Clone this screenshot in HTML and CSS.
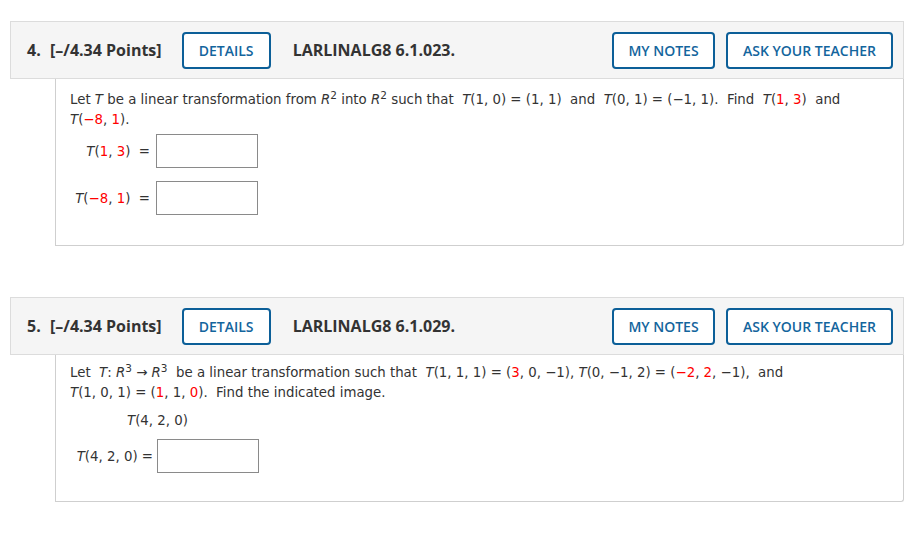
FILE: index.html
```html
<!DOCTYPE html>
<html>
<head>
<meta charset="utf-8">
<link rel="stylesheet" href="styles.css">
</head>
<body>
<div class="page">
  <section class="question q4">
    <div class="qhead">
      <span class="qnum">4.</span>
      <span class="qpts">[–/4.34 Points]</span>
      <button class="btn btn-details">DETAILS</button>
      <span class="qref">LARLINALG8 6.1.023.</span>
      <span class="spacer"></span>
      <button class="btn btn-notes">MY NOTES</button>
      <button class="btn btn-ask">ASK YOUR TEACHER</button>
    </div>
    <div class="qbody body4">
      <p class="prompt">Let <i>T</i> be a linear transformation from <i>R</i><sup>2</sup> into <i>R</i><sup>2</sup> such that&nbsp; <i>T</i>(1, 0) = (1, 1)&nbsp; and&nbsp; <i>T</i>(0, 1) = (−1, 1).&nbsp; Find&nbsp; <i>T</i>(<span class="r">1</span>, <span class="r">3</span>)&nbsp; and<br><i>T</i>(<span class="r">−8</span>, <span class="r">1</span>).</p>
      <div class="answers">
        <span class="lbl"><i>T</i>(<span class="r">1</span>, <span class="r">3</span>)&nbsp; =</span><span class="box"></span>
        <span class="lbl"><i>T</i>(<span class="r">−8</span>, <span class="r">1</span>)&nbsp; =</span><span class="box"></span>
      </div>
    </div>
  </section>

  <section class="question q5">
    <div class="qhead">
      <span class="qnum">5.</span>
      <span class="qpts">[–/4.34 Points]</span>
      <button class="btn btn-details">DETAILS</button>
      <span class="qref">LARLINALG8 6.1.029.</span>
      <span class="spacer"></span>
      <button class="btn btn-notes">MY NOTES</button>
      <button class="btn btn-ask">ASK YOUR TEACHER</button>
    </div>
    <div class="qbody body5">
      <p class="prompt">Let&nbsp; <i>T</i>: <i>R</i><sup>3</sup> → <i>R</i><sup>3</sup>&nbsp; be a linear transformation such that&nbsp; <i>T</i>(1, 1, 1) = (<span class="r">3</span>, 0, −1), <i>T</i>(0, −1, 2) = (<span class="r">−2</span>, <span class="r">2</span>, −1),&nbsp; and<br><i>T</i>(1, 0, 1) = (<span class="r">1</span>, 1, <span class="r">0</span>).&nbsp; Find the indicated image.</p>
      <p class="indented"><i>T</i>(4, 2, 0)</p>
      <div class="answers single">
        <span class="lbl"><i>T</i>(4, 2, 0) =</span><span class="box"></span>
      </div>
    </div>
  </section>
</div>
</body>
</html>
```

FILE: styles.css
```css
html, body {
  margin: 0;
  padding: 0;
  background: #fff;
}

.page {
  padding: 21px 10px 0 10px;
}

.question {
  margin-bottom: 51px;
}

.qhead {
  display: flex;
  align-items: center;
  height: 56px;
  background: #f5f5f5;
  border: 1px solid #dcdcdc;
  padding: 0 10px 0 16px;
  font-family: "Open Sans", "Liberation Sans", sans-serif;
  color: #333;
}

.qnum {
  font-size: 16px;
  font-weight: 700;
  width: 23px;
}

.qpts {
  font-size: 16px;
  font-weight: 700;
  margin-right: 20px;
}

.qref {
  font-size: 16px;
  font-weight: 700;
  margin-left: 22px;
}

.spacer {
  flex: 1;
}

.btn {
  box-sizing: border-box;
  height: 37px;
  background: #fff;
  border: 2px solid #0c5f98;
  border-radius: 4px;
  color: #13659d;
  font-family: "Open Sans", "Liberation Sans", sans-serif;
  font-size: 14px;
  font-weight: 600;
  padding: 0;
  cursor: pointer;
}

.btn-details { width: 89px; }
.btn-notes { width: 103px; margin-right: 11px; }
.btn-ask { width: 167px; }

.qbody {
  margin-left: 45px;
  border: 1px solid #cfcfcf;
  border-top: none;
  border-bottom-right-radius: 3px;
  font-family: "DejaVu Sans", Verdana, sans-serif;
  font-size: 13.33px;
  color: #333;
  padding: 0 14px;
}

.body4 {
  padding-top: 11px;
  padding-bottom: 30px;
}

.body5 {
  padding-top: 8px;
  padding-bottom: 28px;
}

.prompt {
  margin: 0;
  line-height: 20px;
}

.prompt sup {
  font-size: 10.5px;
  line-height: 0;
  vertical-align: 5px;
}

.r {
  color: #ff0000;
}

.answers {
  display: grid;
  grid-template-columns: 80px 102px;
  column-gap: 6px;
  row-gap: 13px;
  align-items: center;
  margin-top: 4px;
}

.lbl {
  text-align: right;
  white-space: nowrap;
}

.box {
  box-sizing: border-box;
  height: 34px;
  border: 1px solid #8a8a8a;
  background: #fff;
}

.indented {
  margin: 8px 0 0 57px;
  line-height: 20px;
}

.answers.single {
  margin-top: 8px;
  grid-template-columns: 83px 102px;
  column-gap: 4px;
}
```
